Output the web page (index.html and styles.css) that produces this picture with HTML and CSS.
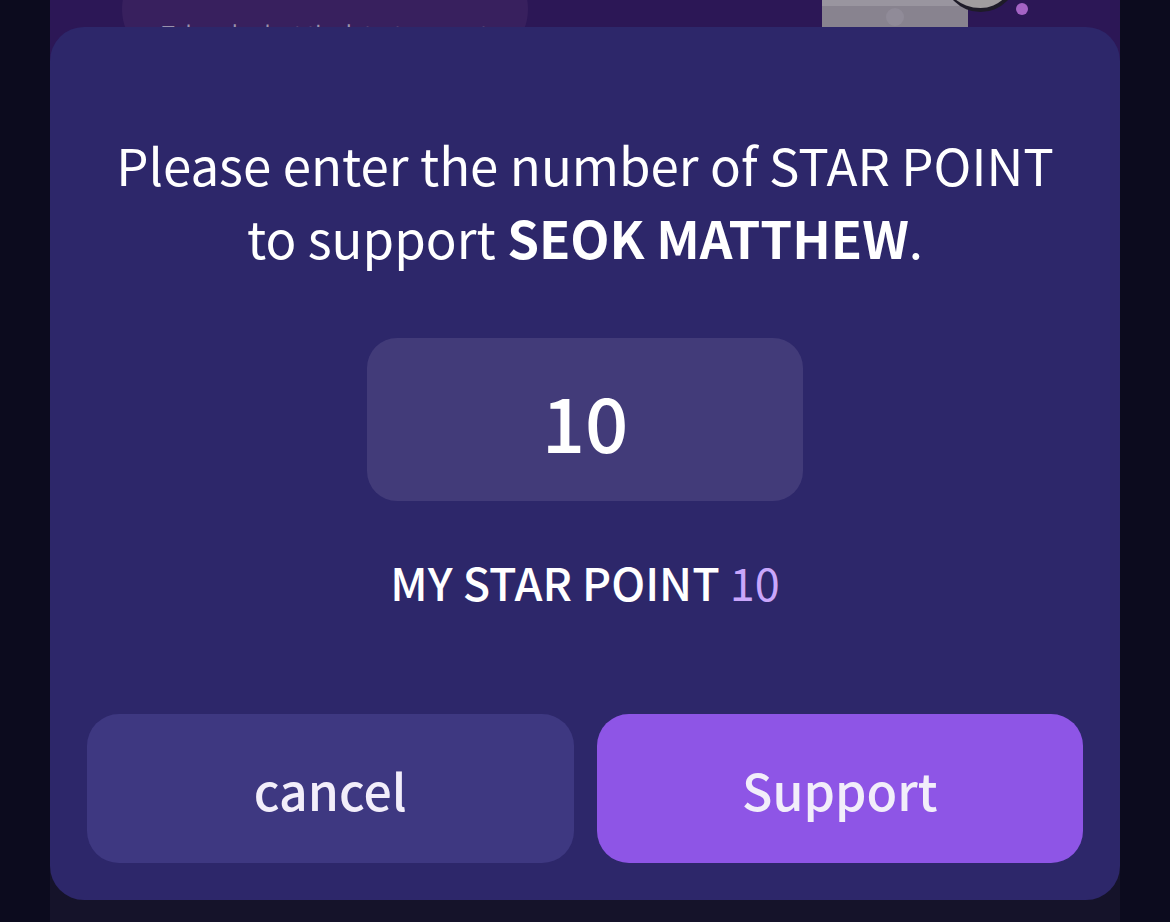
FILE: index.html
```html
<!DOCTYPE html>
<html lang="en">
<head>
  <meta charset="UTF-8" />
  <meta name="viewport" content="width=device-width, initial-scale=1.0" />
  <title>Support Star Point</title>
  <link rel="stylesheet" href="styles.css">
</head>
<body>
  <div class="app">
    <!-- Page content behind the dialog -->
    <div class="feed">
      <div class="notice-pill">
        <span>Take a look at the latest support</span>
      </div>
      <div class="thumb">
        <div class="thumb-card"><span class="thumb-dot"></span></div>
        <div class="thumb-coin"></div>
        <span class="sparkle"></span>
      </div>
    </div>

    <!-- Support dialog -->
    <div class="modal">
      <p class="modal-title">
        Please enter the number of STAR POINT<br>
        to support <strong>SEOK MATTHEW</strong>.
      </p>

      <div class="amount-box">
        <input class="amount-input" type="text" value="10" />
      </div>

      <p class="my-points">MY STAR POINT <span class="my-points-value">10</span></p>

      <div class="actions">
        <button class="btn btn-cancel">cancel</button>
        <button class="btn btn-support">Support</button>
      </div>
    </div>
  </div>
</body>
</html>
```

FILE: styles.css
```css
body {
  margin: 0;
  background-color: #0c0b1e;
  font-family: "Noto Sans CJK KR", "Noto Sans", sans-serif;
  height: 922px;
  overflow: hidden;
}
.app {
  position: relative;
  width: 1070px;
  height: 922px;
  margin-left: 50px;
  background: linear-gradient(to bottom, #2c1756 50%, #15132a 50%);
  overflow: hidden;
}

/* background page */
.feed {
  display: flex;
  align-items: flex-start;
  margin-top: -46px;
  padding-left: 72px;
}
.notice-pill {
  width: 406px;
  height: 110px;
  border-radius: 55px;
  background-color: #38205e;
  display: flex;
  justify-content: center;
  padding-top: 67px;
  box-sizing: border-box;
  color: #9a92ad;
  font-size: 22px;
  line-height: 1;
  white-space: nowrap;
}
.thumb {
  position: relative;
  margin-left: 294px;
  width: 220px;
  height: 90px;
}
.thumb-card {
  width: 146px;
  height: 90px;
  border-radius: 16px;
  background: linear-gradient(to bottom, #99959f 0 52px, #88838f 52px);
  position: relative;
}
.thumb-dot {
  position: absolute;
  left: 64px;
  top: 54px;
  width: 18px;
  height: 18px;
  border-radius: 50%;
  background-color: #908b98;
}
.thumb-coin {
  position: absolute;
  left: 121px;
  top: -17px;
  width: 75px;
  height: 75px;
  border-radius: 50%;
  background-color: #a19d9f;
  border-right: 4px solid #1e1b28;
  border-bottom: 4px solid #1e1b28;
  box-sizing: border-box;
}
.sparkle {
  position: absolute;
  left: 194px;
  top: 49px;
  width: 12px;
  height: 12px;
  border-radius: 50%;
  background-color: #a463c4;
}

/* dialog */
.modal {
  position: absolute;
  top: 27px;
  left: 0;
  right: 0;
  bottom: 22px;
  background-color: #2d276a;
  border-radius: 34px;
  padding: 101px 37px 37px;
  box-sizing: border-box;
  display: flex;
  flex-direction: column;
  align-items: center;
  color: #fff;
}
.modal-title {
  margin: 0;
  font-size: 51px;
  line-height: 73px;
  text-align: center;
  font-weight: 400;
}
.modal-title strong {
  font-weight: 700;
}
.amount-box {
  margin-top: 64px;
  width: 436px;
  height: 163px;
  border-radius: 30px;
  background-color: #423b79;
  display: flex;
  align-items: center;
  justify-content: center;
}
.amount-input {
  width: 100%;
  background: none;
  border: none;
  outline: none;
  text-align: center;
  color: #fff;
  font-family: inherit;
  font-size: 76px;
  font-weight: 500;
  padding: 0;
}
.my-points {
  margin: 53px 0 0;
  font-size: 45px;
  line-height: 56px;
  font-weight: 500;
}
.my-points-value {
  color: #c9a6fb;
  font-weight: 400;
}
.actions {
  margin-top: auto;
  width: 100%;
  display: flex;
  gap: 23px;
}
.btn {
  flex: 1;
  height: 149px;
  border: none;
  border-radius: 32px;
  font-family: inherit;
  font-size: 50px;
  font-weight: 500;
  color: #f2eefa;
  cursor: pointer;
}
.btn-cancel {
  background-color: #3e3881;
}
.btn-support {
  background-color: #8e55e6;
}
```
